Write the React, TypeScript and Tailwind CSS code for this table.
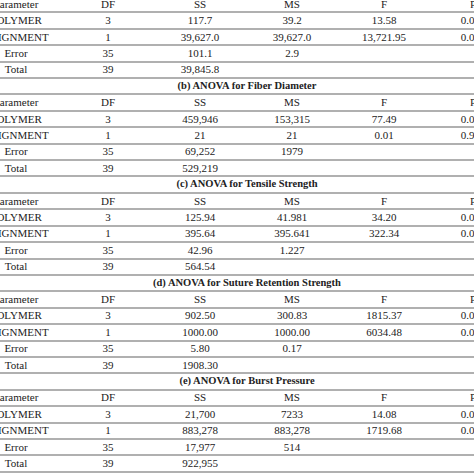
const sections = [
  {
    title: '(a) ANOVA for Wall Thickness',
    rows: [
      ['POLYMER', '3', '117.7', '39.2', '13.58', '0.000'],
      ['ALIGNMENT', '1', '39,627.0', '39,627.0', '13,721.95', '0.000'],
      ['Error', '35', '101.1', '2.9', '', ''],
      ['Total', '39', '39,845.8', '', '', ''],
    ],
  },
  {
    title: '(b) ANOVA for Fiber Diameter',
    rows: [
      ['POLYMER', '3', '459,946', '153,315', '77.49', '0.000'],
      ['ALIGNMENT', '1', '21', '21', '0.01', '0.918'],
      ['Error', '35', '69,252', '1979', '', ''],
      ['Total', '39', '529,219', '', '', ''],
    ],
  },
  {
    title: '(c) ANOVA for Tensile Strength',
    rows: [
      ['POLYMER', '3', '125.94', '41.981', '34.20', '0.000'],
      ['ALIGNMENT', '1', '395.64', '395.641', '322.34', '0.000'],
      ['Error', '35', '42.96', '1.227', '', ''],
      ['Total', '39', '564.54', '', '', ''],
    ],
  },
  {
    title: '(d) ANOVA for Suture Retention Strength',
    rows: [
      ['POLYMER', '3', '902.50', '300.83', '1815.37', '0.000'],
      ['ALIGNMENT', '1', '1000.00', '1000.00', '6034.48', '0.000'],
      ['Error', '35', '5.80', '0.17', '', ''],
      ['Total', '39', '1908.30', '', '', ''],
    ],
  },
  {
    title: '(e) ANOVA for Burst Pressure',
    rows: [
      ['POLYMER', '3', '21,700', '7233', '14.08', '0.000'],
      ['ALIGNMENT', '1', '883,278', '883,278', '1719.68', '0.000'],
      ['Error', '35', '17,977', '514', '', ''],
      ['Total', '39', '922,955', '', '', ''],
    ],
  },
];

const header = ['Parameter', 'DF', 'SS', 'MS', 'F', 'P'];

function Row({ cells }: { cells: string[] }) {
  return (
    <div className="grid grid-cols-6 h-[16.42px] items-center border-b-2 border-[#b0b0b0]">
      {cells.map((c, i) => (
        <div key={i} className={i === 5 ? 'text-center whitespace-nowrap leading-none pr-[6px]' : 'text-center whitespace-nowrap leading-none'}>
          {c}
        </div>
      ))}
    </div>
  );
}

export default function App() {
  return (
    <div className="w-[474px] h-[474px] overflow-hidden bg-white">
      <div
        className="ml-[-30px] mt-[-19.4px] w-[552px] text-[11px] text-[#222]"
        style={{ fontFamily: '"Liberation Serif", "DejaVu Serif", serif' }}
      >
        {sections.map((s) => (
          <div key={s.title}>
            <div className="h-[16.42px] flex items-center justify-center border-b-2 border-[#b0b0b0] font-bold text-[10.5px] leading-none pl-[2px]">
              {s.title}
            </div>
            <Row cells={header} />
            {s.rows.map((r) => (
              <Row key={r[0]} cells={r} />
            ))}
          </div>
        ))}
      </div>
    </div>
  );
}
